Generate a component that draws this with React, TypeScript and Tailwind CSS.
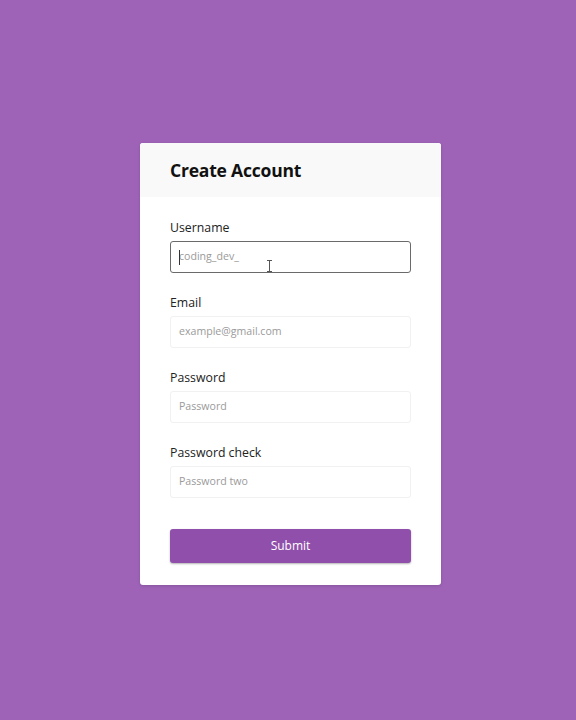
import React from "react";

function Field({ label, placeholder, active }: { label: string; placeholder: string; active?: boolean }) {
  return (
    <div className="flex flex-col">
      <label className="text-[12.3px] leading-[18px] text-[#222]">{label}</label>
      <div
        className={
          "relative mt-[4px] h-[32px] w-full rounded-[3px] bg-white flex items-center px-[8px] " +
          (active ? "border border-[#6a6a6a]" : "border border-[#f1f1f1]")
        }
      >
        {active && <span className="absolute left-[8px] top-[8px] w-[1px] h-[15px] bg-[#333]" />}
        <span className="text-[10.6px] text-[#9a9a9a]">{placeholder}</span>
        {active && (
          <svg className="absolute left-[95px] top-[18px]" width="7" height="12" viewBox="0 0 7 12">
            <path d="M1 0.5h5M3.5 0.5v11M1 11.5h5" stroke="#555" strokeWidth="1" fill="none" />
          </svg>
        )}
      </div>
    </div>
  );
}

export default function App() {
  return (
    <div
      className="w-full h-[720px] bg-[#9e63b7] flex justify-center pt-[143px]"
      style={{ fontFamily: '"Open Sans", "Noto Sans", sans-serif' }}
    >
      <div className="ml-[5px] w-[301px] h-[442px] bg-white rounded-[3px] flex flex-col overflow-hidden shadow-[0_1px_3px_rgba(0,0,0,0.15)]">
        <div className="h-[54px] bg-[#f9f9f9] flex items-center px-[30px]">
          <h1 className="text-[17.5px] font-bold text-[#111] tracking-[-0.2px]">Create Account</h1>
        </div>
        <div className="flex flex-col px-[30px] pt-[22px] gap-[21px]">
          <Field label="Username" placeholder="coding_dev_" active />
          <Field label="Email" placeholder="example@gmail.com" />
          <Field label="Password" placeholder="Password" />
          <Field label="Password check" placeholder="Password two" />
        </div>
        <div className="px-[30px] pt-[31px]">
          <button className="w-full h-[34px] rounded-[3px] bg-[#8f4fab] text-white text-[12px] shadow-[0_1px_2px_rgba(0,0,0,0.3)]">
            Submit
          </button>
        </div>
      </div>
    </div>
  );
}
